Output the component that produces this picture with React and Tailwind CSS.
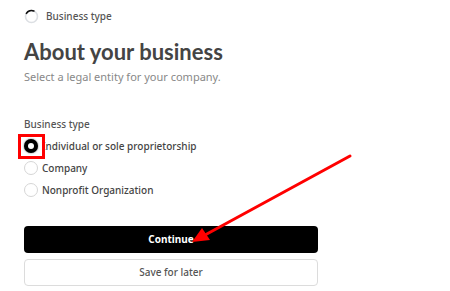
import React from "react";

const options = [
  { id: "individual", label: "Individual or sole proprietorship" },
  { id: "company", label: "Company" },
  { id: "nonprofit", label: "Nonprofit Organization" },
];

function Spinner() {
  return (
    <svg width="15" height="15" viewBox="0 0 15 15" className="shrink-0">
      <circle cx="7.5" cy="7.5" r="6" fill="none" stroke="#dcdfe3" strokeWidth="1.6" />
      <path d="M2.4 4.4 A6 6 0 0 1 9.9 2" fill="none" stroke="#111" strokeWidth="1.6" strokeLinecap="round" />
    </svg>
  );
}

function Radio({ checked }) {
  if (checked) {
    return (
      <span className="w-[14px] h-[14px] rounded-full bg-black flex items-center justify-center shrink-0 shadow-[0_0_2px_rgba(0,0,0,0.6)]">
        <span className="w-[6px] h-[6px] rounded-full bg-white" />
      </span>
    );
  }
  return <span className="w-[14px] h-[14px] rounded-full border border-[#d6d6d6] bg-white shrink-0" />;
}

export default function App() {
  const selected = "individual";

  return (
    <div className="relative w-[450px] h-[291px] bg-white overflow-hidden font-['Noto_Sans',sans-serif]">
      <div className="pl-[24px] pt-[9px] w-[318px]">
        {/* Step */}
        <div className="flex items-center gap-[7px]">
          <Spinner />
          <span className="text-[10px] font-medium text-[#555]">Business type</span>
        </div>

        {/* Heading */}
        <h1 className="mt-[15px] text-[22px] leading-[26px] font-bold text-[#444] font-['Lato',sans-serif]">
          About your business
        </h1>
        <p className="mt-[4px] text-[11px] leading-[16px] text-[#888]">Select a legal entity for your company.</p>

        {/* Options */}
        <div className="mt-[32px] text-[10px] font-medium text-[#555]">Business type</div>
        <div className="mt-[7px] flex flex-col gap-[8px]">
          {options.map((o) => (
            <label key={o.id} className="flex items-center gap-[4px] h-[14px]">
              <Radio checked={o.id === selected} />
              <span className="text-[10px] font-medium text-[#444]">{o.label}</span>
            </label>
          ))}
        </div>

        {/* Actions */}
        <button className="mt-[29px] w-[294px] h-[27px] rounded-[4px] bg-black text-white text-[10px] font-bold">
          Continue
        </button>
        <button className="mt-[6px] w-[294px] h-[27px] rounded-[4px] border border-[#dcdcdc] bg-white text-[#555] text-[10px] font-medium">
          Save for later
        </button>
      </div>

      {/* Annotation overlay */}
      <div className="absolute left-[18px] top-[134px] w-[27px] h-[25px] border-[3px] border-[#ff0000]" />
      <svg className="absolute left-0 top-0 pointer-events-none" width="450" height="291">
        <line x1="350" y1="156" x2="205" y2="235" stroke="#ff0000" strokeWidth="3" strokeLinecap="round" />
        <polygon points="192,242 202,228 210,240" fill="#ff0000" />
      </svg>
    </div>
  );
}
